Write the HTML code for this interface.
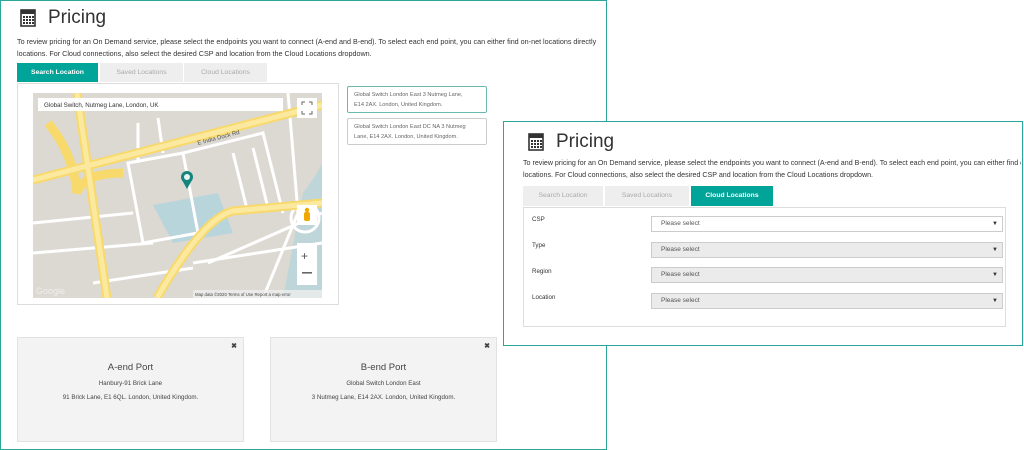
<!DOCTYPE html>
<html><head><meta charset="utf-8"><style>
*{box-sizing:border-box;margin:0;padding:0}
body{width:1024px;height:450px;background:#fff;font-family:"Liberation Sans",sans-serif;position:relative;overflow:hidden;color:#333}
.abs{position:absolute}
.frame{border:1.5px solid #2aa69a;background:#fff}
.title{font-size:19px;color:#333}
.desc{font-size:7.2px;line-height:11.5px;color:#333;white-space:nowrap;overflow:hidden}
.tab{position:absolute;height:19px;background:#eee;color:#aaa;font-size:6.8px;text-align:center;line-height:19px}
.tab.on{background:#00a499;color:#fff;font-weight:bold}
.card{position:absolute;border:1px solid #ccc;font-size:5.6px;line-height:10px;color:#666;padding:3px 6px;border-radius:2px}
.port{position:absolute;background:#f3f3f3;border:1px solid #e2e2e2;text-align:center;color:#444}
.port h3{font-weight:normal;font-size:9.5px;margin-top:24px}
.port p{font-size:6.2px;margin-top:7px}
.port .x{position:absolute;right:6px;top:4px;font-size:7px;font-weight:bold}
.lbl{position:absolute;font-size:6.2px;color:#333}
.sel{position:absolute;left:651px;width:352px;height:16px;border:1px solid #ccc;background:#ebebeb;font-size:6.5px;color:#555;line-height:14px;padding-left:9px}
.sel:after{content:"▼";position:absolute;right:4px;top:0;font-size:6px;color:#333}
</style></head><body>
<svg width="0" height="0" style="position:absolute"><defs>
<symbol id="calc" viewBox="0 0 16 18"><rect x="1" y="1" width="14" height="16" fill="none" stroke="#333" stroke-width="1.6"/><rect x="1" y="1" width="14" height="4" fill="#333"/><g fill="#333"><rect x="3" y="7" width="2" height="2"/><rect x="6" y="7" width="2" height="2"/><rect x="9" y="7" width="2" height="2"/><rect x="12" y="7" width="2" height="2"/><rect x="3" y="10" width="2" height="2"/><rect x="6" y="10" width="2" height="2"/><rect x="9" y="10" width="2" height="2"/><rect x="12" y="10" width="2" height="2"/><rect x="3" y="13" width="2" height="2"/><rect x="6" y="13" width="2" height="2"/><rect x="9" y="13" width="2" height="2"/><rect x="12" y="13" width="2" height="2"/></g></symbol>
</defs></svg>

<div class="abs frame" style="left:0;top:0;width:607px;height:450px"></div>
<svg class="abs" style="left:20px;top:9px" width="16" height="18"><use href="#calc"/></svg>
<div class="abs title" style="left:48px;top:7px">Pricing</div>
<div class="abs desc" style="left:17px;top:36px;width:588px">To review pricing for an On Demand service, please select the endpoints you want to connect (A-end and B-end). To select each end point, you can either find on-net locations directly<br>locations. For Cloud connections, also select the desired CSP and location from the Cloud Locations dropdown.</div>
<div class="tab on" style="left:17px;top:63px;width:81px">Search Location</div>
<div class="tab" style="left:100px;top:63px;width:83px">Saved Locations</div>
<div class="tab" style="left:184px;top:63px;width:83px">Cloud Locations</div>
<div class="abs" style="left:17px;top:83px;width:322px;height:222px;border:1px solid #ddd"></div>
<svg class="abs" style="left:33px;top:93px" width="289" height="205" viewBox="0 0 289 205">
<rect width="289" height="205" fill="#dcd9d2"/>
<path d="M270 100 Q285 80 289 70 L289 205 L250 205 Z" fill="#aad3df" opacity=".6"/>
<path d="M120 112 L185 100 L200 140 L140 150 Z" fill="#aad3df" opacity=".7"/>
<g stroke="#fff" stroke-width="3" fill="none">
<path d="M95 70 L150 60 L165 140 L110 150 Z"/><path d="M150 60 L230 40 L250 120"/><path d="M0 160 L120 150 M0 130 L100 120"/><path d="M160 170 L289 150"/><path d="M175 170 L289 120"/><path d="M255 0 L265 120 L230 205"/><path d="M60 190 L160 175"/><path d="M200 60 L215 120 M220 55 L235 115"/><path d="M105 30 L105 70 M125 25 L130 60"/>
<circle cx="272" cy="125" r="14"/>
</g>
<g stroke="#f8d96b" stroke-width="9" fill="none">
<path d="M0 87 L289 12"/><path d="M44 0 Q60 110 74 205"/><path d="M124 205 Q170 125 200 118 L289 110"/><path d="M15 30 Q40 60 44 100 Q50 80 90 80"/>
</g>
<g stroke="#fce9a0" stroke-width="5" fill="none"><path d="M0 87 L289 12"/><path d="M44 0 Q60 110 74 205"/><path d="M124 205 Q170 125 200 118 L289 110"/></g>
<text x="165" y="52" font-size="6" fill="#555" transform="rotate(-15 165 52)" font-family="Liberation Sans">E India Dock Rd</text>
<circle cx="154" cy="84" r="6" fill="#13857d"/><path d="M149 87 L154 96 L159 87 Z" fill="#13857d"/><circle cx="154" cy="84" r="3" fill="#e7f4f2"/>
<rect x="5" y="5" width="245" height="13" fill="#fff"/><text x="11" y="14" font-size="6.2" fill="#333" font-family="Liberation Sans">Global Switch, Nutmeg Lane, London, UK</text>
<rect x="264" y="5" width="20" height="20" fill="#fff"/><path d="M269 12 v-3 h3 M276 9 h3 v3 M279 18 v3 h-3 M272 21 h-3 v-3" stroke="#666" fill="none"/>
<rect x="264" y="112" width="20" height="20" fill="#fff"/><circle cx="274" cy="117" r="2.2" fill="#f0a800"/><rect x="271" y="119" width="6" height="9" rx="2" fill="#f0a800"/>
<rect x="264" y="150" width="20" height="42" fill="#fff"/><text x="268" y="167" font-size="12" fill="#555" font-family="Liberation Sans">+</text><rect x="269" y="179" width="10" height="1.6" fill="#666"/>
<text x="3" y="201" font-size="9" fill="#eee" font-family="Liberation Sans">Google</text>
<rect x="160" y="197" width="129" height="8" fill="#eee" opacity=".8"/><text x="162" y="203" font-size="4.3" fill="#444" font-family="Liberation Sans">Map data ©2020    Terms of Use    Report a map error</text>
</svg>
<div class="card" style="left:347px;top:86px;width:140px;height:27px;border-color:#6bb8ae;border-width:1.5px">Global Switch London East 3 Nutmeg Lane,<br>E14 2AX. London, United Kingdom.</div>
<div class="card" style="left:347px;top:118px;width:140px;height:27px">Global Switch London East DC NA 3 Nutmeg<br>Lane, E14 2AX. London, United Kingdom.</div>
<div class="port" style="left:17px;top:337px;width:227px;height:105px"><span class="x">✖</span><h3>A-end Port</h3><p>Hanbury-91 Brick Lane</p><p>91 Brick Lane, E1 6QL. London, United Kingdom.</p></div>
<div class="port" style="left:270px;top:337px;width:227px;height:105px"><span class="x">✖</span><h3>B-end Port</h3><p>Global Switch London East</p><p>3 Nutmeg Lane, E14 2AX. London, United Kingdom.</p></div>

<div class="abs frame" style="left:503px;top:121px;width:520px;height:225px;border-width:1.5px"></div>
<svg class="abs" style="left:528px;top:133px" width="16" height="18"><use href="#calc"/></svg>
<div class="abs title" style="left:556px;top:131px">Pricing</div>
<div class="abs desc" style="left:523px;top:157px;width:498px;font-size:7.1px;line-height:12px">To review pricing for an On Demand service, please select the endpoints you want to connect (A-end and B-end). To select each end point, you can either find on-net<br>locations. For Cloud connections, also select the desired CSP and location from the Cloud Locations dropdown.</div>
<div class="tab" style="left:523px;top:186px;width:80px;height:20px">Search Location</div>
<div class="tab" style="left:605px;top:186px;width:84px;height:20px">Saved Locations</div>
<div class="tab on" style="left:691px;top:186px;width:82px;height:20px">Cloud Locations</div>
<div class="abs" style="left:523px;top:207px;width:483px;height:120px;border:1px solid #ddd"></div>
<div class="lbl" style="left:532px;top:216px">CSP</div>
<div class="lbl" style="left:532px;top:242px">Type</div>
<div class="lbl" style="left:532px;top:268px">Region</div>
<div class="lbl" style="left:532px;top:294px">Location</div>
<div class="sel" style="top:216px;background:#fff">Please select</div>
<div class="sel" style="top:242px">Please select</div>
<div class="sel" style="top:267px">Please select</div>
<div class="sel" style="top:293px">Please select</div>
</body></html>
